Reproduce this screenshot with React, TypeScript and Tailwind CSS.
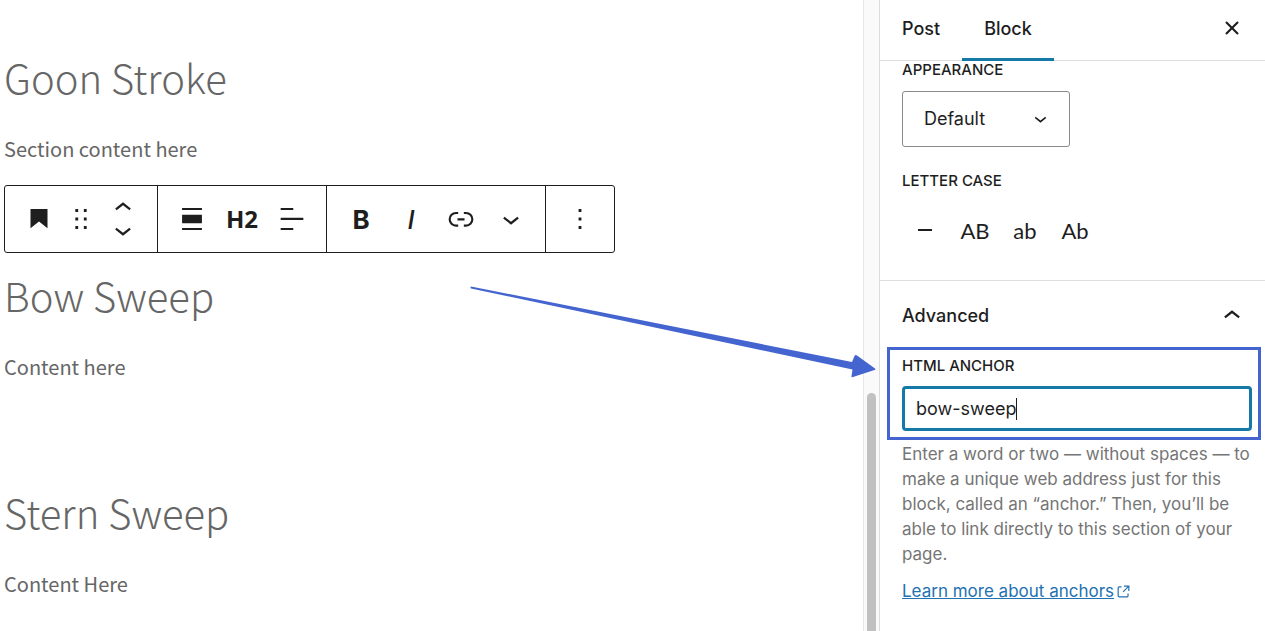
import React, { useState } from "react";

const sans = "font-['Inter','Liberation_Sans',sans-serif]";
const humanist = "font-['Noto_Sans_CJK_SC','Noto_Sans',sans-serif]";

interface IconProps {
  d: string;
  className?: string;
}

function Icon({ d, className = "size-[34px]" }: IconProps) {
  return (
    <svg viewBox="0 0 24 24" fill="currentColor" className={className} aria-hidden="true">
      <path d={d} />
    </svg>
  );
}

const icons = {
  bookmark: "M6 5v13.6l6-4.75 6 4.75V5H6z",
  drag: "M8 7h2V5H8v2zm0 6h2v-2H8v2zm0 6h2v-2H8v2zm6-14v2h2V5h-2zm0 8h2v-2h-2v2zm0 6h2v-2h-2v2z",
  up: "M6.5 12.4L12 8l5.5 4.4-.9 1.2L12 10l-4.5 3.6-1-1.2z",
  down: "M17.5 11.6L12 16l-5.5-4.4.9-1.2L12 14l4.5-3.6 1 1.2z",
  align: "M19 5.7H5V4.2h14v1.5zM19 19.8H5v-1.5h14v1.5zM5 9h14v6H5V9z",
  textLeft: "M4 19.8h8.9v-1.5H4v1.5zm8.9-15.6H4v1.5h8.9V4.2zm-8.9 7v1.5h16v-1.5H4z",
  link: "M10 17.389H8.444A5.194 5.194 0 1 1 8.444 7H10v1.5H8.444a3.694 3.694 0 0 0 0 7.389H10v1.5ZM14 7h1.556a5.194 5.194 0 0 1 0 10.39H14v-1.5h1.556a3.694 3.694 0 0 0 0-7.39H14V7Zm-4.5 6h5v-1.5h-5V13Z",
  more: "M13 19h-2v-2h2v2zm0-6h-2v-2h2v2zm0-6h-2V5h2v2z",
  close: "M12 13.06l3.712 3.713 1.061-1.06L13.061 12l3.712-3.712-1.06-1.06L12 10.938 8.288 7.227l-1.061 1.06L10.939 12l-3.712 3.712 1.06 1.061L12 13.061z",
  external:
    "M19.5 4.5h-7V6h4.44l-5.97 5.97 1.06 1.06L18 7.06v4.44h1.5v-7Zm-13 1a2 2 0 0 0-2 2v10a2 2 0 0 0 2 2h10a2 2 0 0 0 2-2v-3H17v3a.5.5 0 0 1-.5.5h-10a.5.5 0 0 1-.5-.5v-10a.5.5 0 0 1 .5-.5h3V5.5h-3Z",
};

interface ToolProps {
  label: string;
  children: React.ReactNode;
}

function Tool({ label, children }: ToolProps) {
  return (
    <button
      type="button"
      aria-label={label}
      className="flex h-full w-[34px] shrink-0 items-center justify-center"
    >
      {children}
    </button>
  );
}

function Toolbar() {
  return (
    <div
      role="toolbar"
      aria-label="Block tools"
      className="flex h-[68px] w-fit divide-x divide-[#1e1e1e] rounded-[3px] border border-[#1e1e1e] text-[#1e1e1e]"
    >
      <div className="flex gap-2 px-[17px]">
        <Tool label="Heading">
          <Icon d={icons.bookmark} />
        </Tool>
        <Tool label="Drag">
          <Icon d={icons.drag} />
        </Tool>
        <div className="flex flex-col justify-center">
          <button type="button" aria-label="Move up" className="flex h-[22px] items-center">
            <Icon d={icons.up} />
          </button>
          <button type="button" aria-label="Move down" className="flex h-[22px] items-center">
            <Icon d={icons.down} />
          </button>
        </div>
      </div>
      <div className="flex gap-4 px-[17px]">
        <Tool label="Align">
          <Icon d={icons.align} />
        </Tool>
        <Tool label="Change level">
          <span className="font-['Open_Sans',sans-serif] text-2xl font-bold">H2</span>
        </Tool>
        <Tool label="Align text">
          <Icon d={icons.textLeft} />
        </Tool>
      </div>
      <div className="flex gap-4 px-[17px]">
        <Tool label="Bold">
          <span className={`${sans} text-[26px] font-bold`}>B</span>
        </Tool>
        <Tool label="Italic">
          <span className={`${sans} text-[26px] font-medium italic`}>I</span>
        </Tool>
        <Tool label="Link">
          <Icon d={icons.link} />
        </Tool>
        <Tool label="More formatting">
          <Icon d={icons.down} />
        </Tool>
      </div>
      <div className="flex px-[17px]">
        <Tool label="Options">
          <Icon d={icons.more} />
        </Tool>
      </div>
    </div>
  );
}

interface SectionProps {
  title: string;
  text: string;
}

function Section({ title, text }: SectionProps) {
  return (
    <section className={`${humanist} text-[#666]`}>
      <h2 className="text-[40px] leading-[50px] font-light">{title}</h2>
      <p className="mt-[33px] text-xl leading-7">{text}</p>
    </section>
  );
}

function Editor() {
  return (
    <main className="min-w-0 flex-1 pt-[52px] pl-1">
      <Section title="Goon Stroke" text="Section content here" />
      <div className="mt-[22px] mb-[17px]">
        <Toolbar />
      </div>
      <Section title="Bow Sweep" text="Content here" />
      <div className="mt-[106px]">
        <Section title="Stern Sweep" text="Content Here" />
      </div>
    </main>
  );
}

function Arrow() {
  return (
    <svg
      viewBox="0 0 406 94"
      fill="#4465d0"
      className="pointer-events-none absolute right-full bottom-[57px] mr-[14px] h-[94px] w-[406px] max-w-none"
      aria-hidden="true"
    >
      <path d="M1 0.500L382 76L384.500 70Q385.500 68.500 387 69.500L405 82.500Q406 83.500 404.500 84L383 91Q381 91.500 381.500 90L382.500 83.500L1 2.500Q0 1.500 1 0.500z" />
    </svg>
  );
}

function Sidebar() {
  const [tab, setTab] = useState("Block");
  const [anchor, setAnchor] = useState("bow-sweep");

  return (
    <aside className={`${sans} w-[386px] shrink-0 border-l border-[#ddd] text-[17px] text-[#1e1e1e]`}>
      <header className="flex h-[61px] items-stretch border-b border-[#ddd]">
        {["Post", "Block"].map((name) => (
          <button
            key={name}
            type="button"
            onClick={() => setTab(name)}
            className={`-mb-px border-b-[3px] px-[22px] text-lg font-medium ${
              tab === name ? "border-[#1579a8]" : "border-transparent"
            }`}
          >
            {name}
          </button>
        ))}
        <button type="button" aria-label="Close settings" className="mr-4 ml-auto pb-1">
          <Icon d={icons.close} />
        </button>
      </header>

      <div className="border-b border-[#ddd] px-[22px] pt-px pb-[25px]">
        <label htmlFor="appearance" className="block text-[15px] leading-4 font-medium uppercase">
          Appearance
        </label>
        <div className="relative mt-[13px] w-[168px]">
          <select
            id="appearance"
            className="h-14 w-full appearance-none rounded-[3px] border border-[#8a8a8a] bg-white pl-[21px] text-lg"
          >
            <option>Default</option>
          </select>
          <Icon
            d={icons.down}
            className="pointer-events-none absolute top-[15px] right-[17px] size-[25px]"
          />
        </div>
        <h3 className="mt-[26px] text-[15px] leading-4 font-medium uppercase">Letter case</h3>
        <div className="mt-4 flex gap-1 font-['Lato',sans-serif] text-[22px]">
          <button type="button" aria-label="None" className="flex h-[50px] w-[46px] items-center justify-center">
            <span className="h-0.5 w-[14px] bg-[#1e1e1e]" />
          </button>
          {["AB", "ab", "Ab"].map((name) => (
            <button key={name} type="button" className="h-[50px] w-[46px]">
              {name}
            </button>
          ))}
        </div>
      </div>

      <button
        type="button"
        aria-expanded="true"
        className="flex h-[66px] w-full items-center justify-between pt-[3px] pr-4 pl-[22px] text-lg font-medium"
      >
        Advanced
        <Icon d={icons.up} />
      </button>

      <div className="relative mr-1 ml-[7px] border-3 border-[#4465d0] pt-2 pr-[6px] pb-[6px] pl-3">
        <Arrow />
        <label htmlFor="anchor" className="block text-[15px] leading-4 font-medium uppercase">
          HTML anchor
        </label>
        <div className="relative mt-3">
          <input
            id="anchor"
            type="text"
            value={anchor}
            onChange={(e) => setAnchor(e.target.value)}
            className="block h-[45px] w-full rounded-[4px] border-[3px] border-[#1579a8] px-[11px] text-lg caret-transparent outline-none"
          />
          <span className="absolute top-3 left-[114px] h-[22px] w-px bg-[#1e1e1e]" />
        </div>
      </div>

      <div className="pr-2 pl-[22px] leading-[25px]">
        <p className="mt-0.5 text-[#757575]">
          Enter a word or two — without spaces — to make a unique web address just for this block,
          called an “anchor.” Then, you’ll be able to link directly to this section of your page.
        </p>
        <a href="#anchors" className="mt-3 flex items-center text-[#2271b1]">
          <span className="underline">Learn more about anchors</span>
          <Icon d={icons.external} className="size-[19px]" />
        </a>
      </div>
    </aside>
  );
}

export default function App() {
  return (
    <div className="flex min-h-screen overflow-hidden bg-white">
      <Editor />
      {/* Scrollbar track */}
      <div className="flex w-4 shrink-0 flex-col border-l border-[#e8e8e8] bg-[#fafafa] pt-[393px] pl-[3px]">
        <div className="w-[9px] flex-1 rounded-t-full bg-[#c1c1c1]" />
      </div>
      <Sidebar />
    </div>
  );
}
